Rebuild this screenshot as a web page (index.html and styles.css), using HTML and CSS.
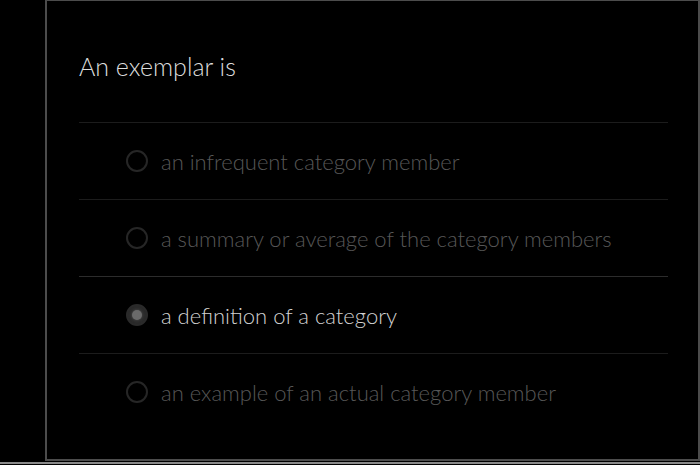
FILE: index.html
```html
<!DOCTYPE html>
<html>
<head>
<meta charset="utf-8">
<link rel="stylesheet" href="styles.css">
</head>
<body>
<div class="page">
  <div class="card">
    <h1 class="question">An exemplar is</h1>
    <ul class="options">
      <li class="option"><span class="radio"></span><span class="label">an infrequent category member</span></li>
      <li class="option"><span class="radio"></span><span class="label">a summary or average of the category members</span></li>
      <li class="option selected"><span class="radio"><span class="dot"></span></span><span class="label">a definition of a category</span></li>
      <li class="option"><span class="radio"></span><span class="label">an example of an actual category member</span></li>
    </ul>
  </div>
  <div class="strip"></div>
</div>
</body>
</html>
```

FILE: styles.css
```css
html, body {
  margin: 0;
  padding: 0;
  background: #000;
  width: 700px;
  height: 465px;
  overflow: hidden;
  font-family: Lato, "Open Sans", sans-serif;
}
.page {
  display: flex;
  flex-direction: column;
  width: 700px;
  height: 465px;
}
.card {
  margin-left: 45px;
  height: 458px;
  border: 2px solid #4c4c4c;
  border-top-width: 1px;
  padding: 0 30px 0 32px;
  box-sizing: content-box;
  width: 589px;
}
.strip {
  margin-top: 1px;
  height: 2px;
  background: #8a8a8a;
}
.question {
  margin: 0;
  padding-top: 51px;
  height: 70px;
  font-size: 25px;
  line-height: 29px;
  font-weight: 300;
  color: #dcdcdc;
  border-bottom: 1px solid #1c1c1c;
  box-sizing: content-box;
}
.options {
  list-style: none;
  margin: 0;
  padding: 0;
}
.option {
  display: flex;
  align-items: center;
  height: 76px;
  border-bottom: 1px solid #1c1c1c;
  padding-left: 47px;
  gap: 13px;
  color: #575757;
  font-size: 22px;
  font-weight: 300;
}
.option:nth-child(2) {
  border-bottom-color: #2c2c2c;
}
.option:last-child {
  border-bottom: none;
}
.radio {
  width: 22px;
  height: 22px;
  border: 2px solid #262626;
  border-radius: 50%;
  box-sizing: border-box;
  display: flex;
  align-items: center;
  justify-content: center;
  flex: none;
}
.selected .radio {
  border-color: #2a2a2a;
  background: #2a2a2a;
}
.dot {
  width: 10px;
  height: 10px;
  border-radius: 50%;
  background: #6a6a6a;
  box-shadow: 0 0 3px #555;
}
.selected .label {
  color: #d2d2d2;
}
```
